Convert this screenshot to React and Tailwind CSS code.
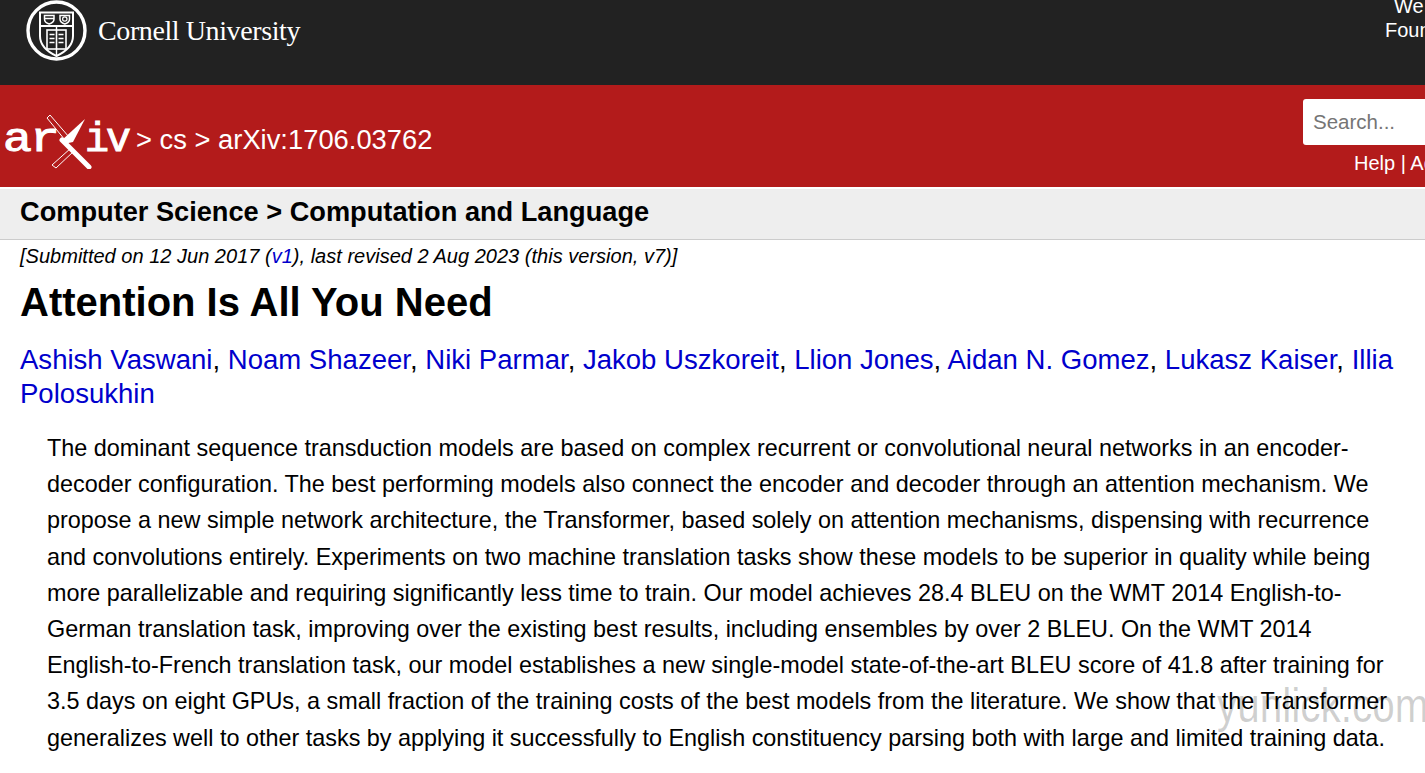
function CornellLogo() {
  return (
    <svg width="62" height="62" viewBox="0 0 62 62" fill="none" stroke="#fff" className="shrink-0">
      <circle cx="30.5" cy="30.5" r="28.5" strokeWidth="3.4" />
      <path d="M14 12.5H47V36C47 45 39 52 30.5 56C22 52 14 45 14 36Z" strokeWidth="2" />
      <path d="M14 26H47" strokeWidth="2" />
      <path d="M30.5 26V56" strokeWidth="1.4" />
      <path d="M18.5 15.5H28V19C28 22 25 23.5 23.2 24C21.4 23.5 18.5 22 18.5 19Z" strokeWidth="1.5" />
      <path d="M18.5 18.5H28" strokeWidth="1.5" />
      <path d="M34 15.5H43.5V19C43.5 22 40.5 23.5 38.8 24C37 23.5 34 22 34 19Z" strokeWidth="1.5" />
      <circle cx="38.8" cy="19" r="2.2" strokeWidth="1.2" />
      <rect x="21" y="30" width="19" height="19" fill="#222" strokeWidth="1.6" />
      <path d="M30.5 30V49" strokeWidth="1.6" />
      <path d="M23.5 34.5H28.5M23.5 38.5H28.5M23.5 42.5H28.5M32.5 34.5H37.5M32.5 38.5H37.5M32.5 42.5H37.5" strokeWidth="1.6" />
    </svg>
  );
}

function ArxivLogo() {
  return (
    <svg width="130" height="58" viewBox="0 0 130 58" className="shrink-0">
      <g fill="#fff" stroke="#fff" strokeWidth="1" fontFamily="'Liberation Mono', monospace" fontSize="41">
        <text x="1" y="40" textLength="29" lengthAdjust="spacingAndGlyphs">a</text>
        <text x="28" y="40" textLength="30" lengthAdjust="spacingAndGlyphs">r</text>
        <text x="83" y="40" textLength="24" lengthAdjust="spacingAndGlyphs">i</text>
        <text x="104" y="40" textLength="25" lengthAdjust="spacingAndGlyphs">v</text>
      </g>
      {/* upper thin blade */}
      <path d="M45 7L48 4L67 26L63 29Z" fill="#b31b1b" stroke="#fff" strokeWidth="1" />
      {/* lower thin blade */}
      <path d="M69 37L72 40L54 57L50 54Z" fill="#b31b1b" stroke="#fff" strokeWidth="1" />
      {/* bold strokes of the X */}
      <path d="M83 8L60 29L62 33L71 31Z" fill="#fff" />
      <path d="M60 29L87 56" stroke="#fff" strokeWidth="5" strokeLinecap="round" fill="none" />
    </svg>
  );
}

function AuthorLink({ children }) {
  return <a href="#" className="text-[#0000cc]">{children}</a>;
}

export default function App() {
  const authors = ["Ashish Vaswani", "Noam Shazeer", "Niki Parmar", "Jakob Uszkoreit", "Llion Jones", "Aidan N. Gomez", "Lukasz Kaiser", "Illia Polosukhin"];

  return (
    <div className="relative h-[773px] w-[1425px] overflow-hidden bg-white font-['Liberation_Sans',Arial,sans-serif] text-black">
      {/* Cornell bar */}
      <div className="flex h-[85px] items-start justify-between bg-[#222222] pl-[26px]">
        <div className="flex items-center gap-[10px]">
          <CornellLogo />
          <span className="font-['Liberation_Serif',serif] text-[28px] leading-[62px] tracking-[-0.4px] text-white">Cornell University</span>
        </div>
        <div className="mt-[-6px] w-[40px] whitespace-nowrap text-[20px] leading-[24px] text-white">
          <div className="pl-[9px]">We</div>
          <div>Foundation</div>
        </div>
      </div>

      {/* arXiv bar */}
      <div className="flex h-[102px] items-start justify-between bg-[#b31b1b]">
        <div className="flex items-center pl-[2px] pt-[24px]">
          <ArxivLogo />
          <span className="ml-[4px] mt-[1px] whitespace-nowrap text-[27.35px] leading-[60px] text-white">&gt; cs &gt; arXiv:1706.03762</span>
        </div>
        <div className="w-[122px] shrink-0 whitespace-nowrap pt-[14px]">
          <div className="h-[46px] w-[200px] rounded-l-[3px] bg-white pl-[10px] text-[20.5px] leading-[46px] text-[#757575]">Search...</div>
          <div className="mt-[6px] pl-[51px] text-[20px] leading-[24px] text-white">Help | Advanced</div>
        </div>
      </div>

      {/* Subject bar */}
      <div className="mt-[2px] h-[51px] border-b border-[#cccccc] bg-[#eeeeee] pl-[20px] text-[27.2px] font-bold leading-[46px]">
        Computer Science &gt; Computation and Language
      </div>

      {/* Paper */}
      <div className="pl-[20px] pr-[30px]">
        <div className="mt-[3px] text-[20.05px] italic leading-[27px]">
          [Submitted on 12 Jun 2017 (<a href="#" className="text-[#0000cc]">v1</a>), last revised 2 Aug 2023 (this version, v7)]
        </div>
        <h1 className="mt-[9px] text-[40px] font-bold leading-[46px]">Attention Is All You Need</h1>
        <div className="mt-[18px] text-[27.55px] leading-[34px]">
          {authors.map((name, i) => (
            <span key={name}>
              <AuthorLink>{name}</AuthorLink>
              {i < authors.length - 1 ? ", " : ""}
            </span>
          ))}
        </div>
        <p className="ml-[27px] mt-[19px] text-[23.4px] leading-[36.2px]">
          The dominant sequence transduction models are based on complex recurrent or convolutional neural networks in an encoder-decoder configuration. The best performing models also connect the encoder and decoder through an attention mechanism. We propose a new simple network architecture, the Transformer, based solely on attention mechanisms, dispensing with recurrence and convolutions entirely. Experiments on two machine translation tasks show these models to be superior in quality while being more parallelizable and requiring significantly less time to train. Our model achieves 28.4 BLEU on the WMT 2014 English-to-German translation task, improving over the existing best results, including ensembles by over 2 BLEU. On the WMT 2014 English-to-French translation task, our model establishes a new single-model state-of-the-art BLEU score of 41.8 after training for 3.5 days on eight GPUs, a small fraction of the training costs of the best models from the literature. We show that the Transformer generalizes well to other tasks by applying it successfully to English constituency parsing both with large and limited training data.
        </p>
      </div>

      {/* Watermark */}
      <div className="absolute left-[1217px] top-[675px] origin-top scale-y-[1.2] whitespace-nowrap text-[40.5px] leading-[50px] text-[#00000030]">yunlick.com</div>
    </div>
  );
}
